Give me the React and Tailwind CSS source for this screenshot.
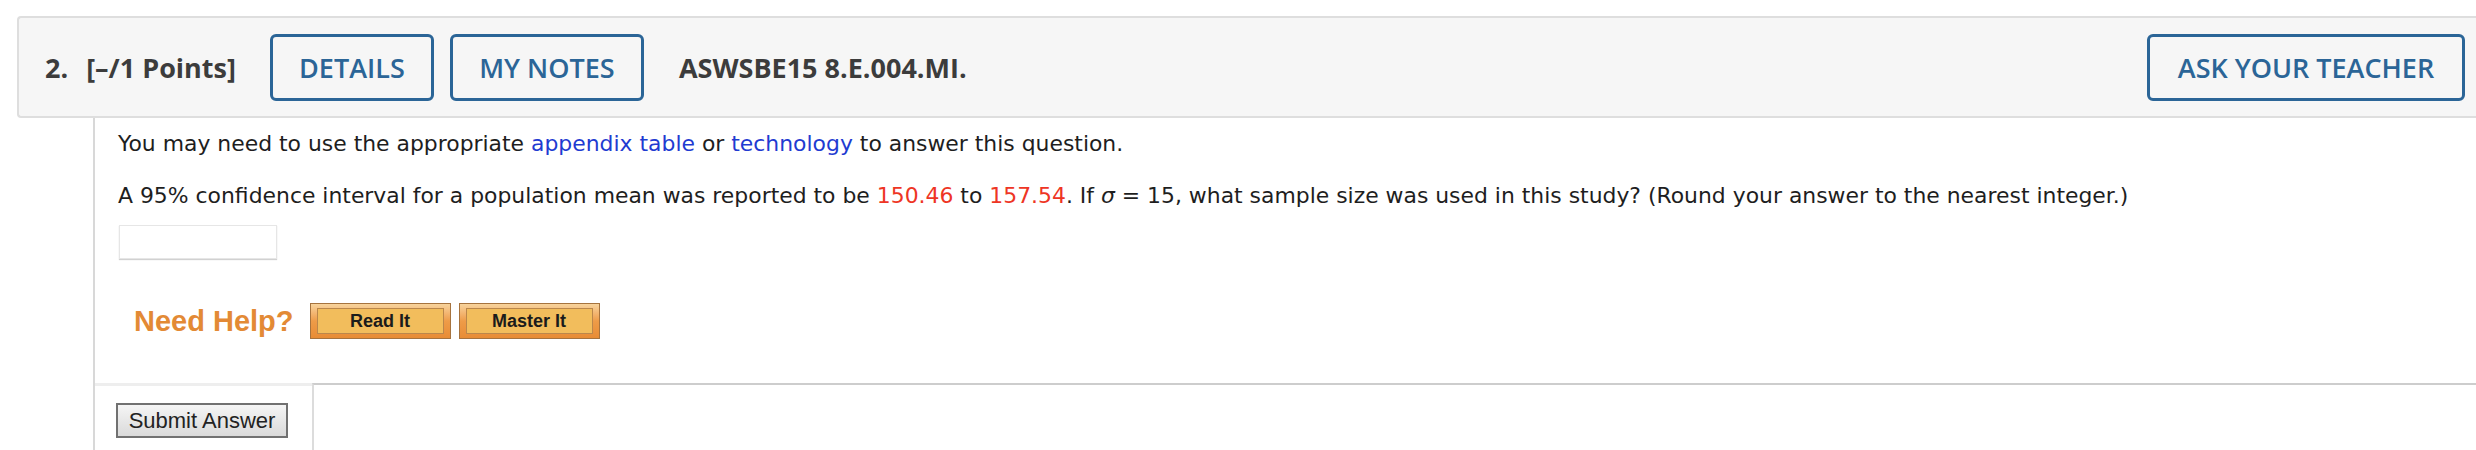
import React from "react";

function HeaderButton({ children, className = "" }) {
  return (
    <div
      className={`h-[67px] flex items-center justify-center rounded-[6px] border-[3px] border-[#2b6597] text-[#2b6597] font-semibold text-[27px] leading-none ${className}`}
    >
      {children}
    </div>
  );
}

function HelpButton({ children }) {
  return (
    <div className="w-[141px] h-[36px] border border-[#a6733e] bg-gradient-to-b from-[#f7d39c] via-[#ee9c48] to-[#e88c35] px-[6px] py-[4px]">
      <div className="w-full h-full border border-[#bb874b] bg-[#f2bd5c] flex items-center justify-center font-bold text-[18px] leading-none text-[#1b1b1b] [font-family:'Liberation_Sans',Arial,sans-serif]">
        {children}
      </div>
    </div>
  );
}

export default function App() {
  return (
    <div className="w-full h-[450px] bg-white overflow-hidden pt-[16px]">
      <div className="ml-[17px] h-[102px] bg-[#f6f6f6] border-2 border-r-0 border-[#dedede] rounded-l-[4px] flex items-center [font-family:'Open_Sans',sans-serif]">
        <span className="ml-[26px] font-bold text-[27px] text-[#3c3c3c] leading-none">2.</span>
        <span className="ml-[18px] font-bold text-[27px] text-[#3c3c3c] leading-none">[–/1 Points]</span>
        <HeaderButton className="ml-[34px] w-[164px]">DETAILS</HeaderButton>
        <HeaderButton className="ml-[16px] w-[194px]">MY NOTES</HeaderButton>
        <span className="ml-[35px] font-bold text-[27px] text-[#3c3c3c] leading-none">ASWSBE15 8.E.004.MI.</span>
        <HeaderButton className="ml-auto mr-[11px] w-[318px]">ASK YOUR TEACHER</HeaderButton>
      </div>

      <div className="ml-[93px] border-l-2 border-[#d8d8d8] h-[334px] flex flex-col">
        <div className="pl-[23px] pt-[12px] [font-family:'DejaVu_Sans',Verdana,sans-serif] text-[21.9px] leading-[28px] text-[#1e1e1e]">
          <p>
            You may need to use the appropriate{" "}
            <span className="text-[#1f3bd1]">appendix table</span> or{" "}
            <span className="text-[#1f3bd1]">technology</span> to answer this question.
          </p>
          <p className="mt-[24px]">
            A 95% confidence interval for a population mean was reported to be{" "}
            <span className="text-[#ee3524]">150.46</span> to{" "}
            <span className="text-[#ee3524]">157.54</span>. If <i>σ</i> = 15, what sample size was
            used in this study? (Round your answer to the nearest integer.)
          </p>
          <div className="mt-[15px] ml-[1px] w-[158px] h-[34px] bg-white border border-[#e6e6e6] shadow-[0_1px_1px_rgba(0,0,0,0.18)]"></div>
        </div>

        <div className="mt-[44px] pl-[39px] flex items-center h-[36px]">
          <span className="[font-family:'Liberation_Sans',Arial,sans-serif] font-bold text-[29px] leading-none text-[#e38a35]">
            Need Help?
          </span>
          <div className="ml-[16px] flex gap-[8px]">
            <HelpButton>Read It</HelpButton>
            <HelpButton>Master It</HelpButton>
          </div>
        </div>

        <div className="mt-[44px] flex flex-1">
          <div className="w-[217px] border-t-[3px] border-[#eeeeee] pl-[21px] pt-[17px]">
            <div className="w-[172px] h-[35px] border-2 border-[#717171] bg-gradient-to-b from-[#f5f5f5] to-[#dadada] flex items-center justify-center [font-family:'Liberation_Sans',Arial,sans-serif] text-[22px] leading-none text-[#222222]">
              Submit Answer
            </div>
          </div>
          <div className="flex-1 border-t-2 border-[#cdcdcd] border-l-2 border-l-[#dcdcdc]"></div>
        </div>
      </div>
    </div>
  );
}
